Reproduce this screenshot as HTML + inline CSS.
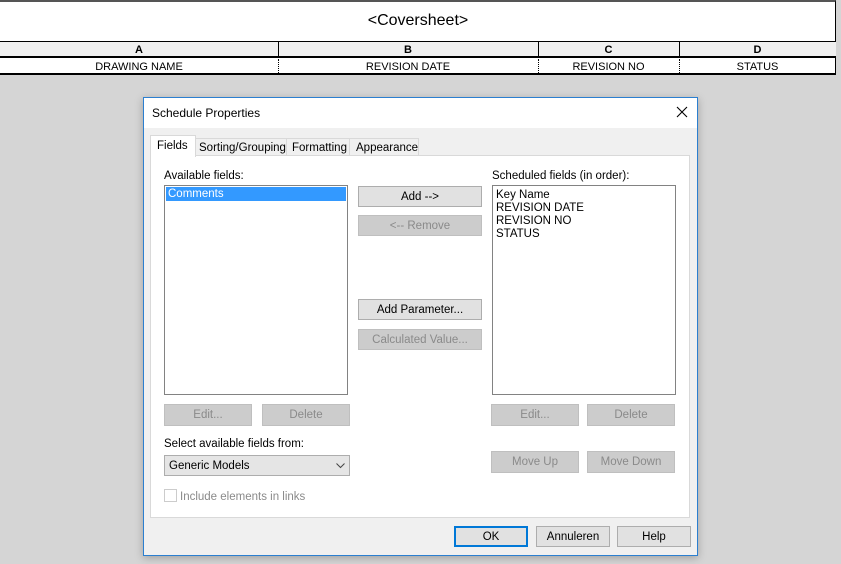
<!DOCTYPE html>
<html><head><meta charset="utf-8"><style>
*{box-sizing:border-box;margin:0;padding:0}
body{width:841px;height:564px;background:#d5d5d5;position:relative;overflow:hidden;font-family:"Liberation Sans",sans-serif;font-size:11.5px;color:#000}
.a{position:absolute}
.btn{position:absolute;background:#e1e1e1;border:1px solid #adadad;text-align:center;line-height:21px;font-size:11.5px}
.dis{background:#cccccc;border-color:#bfbfbf;color:#8a8a8a}
.cell{position:absolute;text-align:center;font-size:11px}
</style></head><body>
<div class="a" style="left:0;top:0;width:836px;height:75px;background:#fff;border:1px solid #000;border-left:none;border-top:2px solid #555"></div>
<div class="a" style="left:0;top:12px;width:836px;text-align:center;font-size:16px">&lt;Coversheet&gt;</div>
<div class="a" style="left:0;top:41px;width:836px;height:17px;background:#f0f0f0;border-top:1px solid #000;border-bottom:2px solid #000"></div>
<div class="a" style="left:0;top:73px;width:836px;height:2px;background:#000"></div>
<div class="a" style="left:278px;top:42px;width:1px;height:15px;background:#000"></div>
<div class="a" style="left:538px;top:42px;width:1px;height:15px;background:#000"></div>
<div class="a" style="left:679px;top:42px;width:1px;height:15px;background:#000"></div>
<div class="a" style="left:278px;top:59px;height:14px;border-left:1px dotted #000"></div>
<div class="a" style="left:538px;top:59px;height:14px;border-left:1px dotted #000"></div>
<div class="a" style="left:679px;top:59px;height:14px;border-left:1px dotted #000"></div>
<div class="cell" style="left:0;width:278px;top:44px;font-weight:bold">A</div>
<div class="cell" style="left:278px;width:260px;top:44px;font-weight:bold">B</div>
<div class="cell" style="left:538px;width:141px;top:44px;font-weight:bold">C</div>
<div class="cell" style="left:679px;width:157px;top:44px;font-weight:bold">D</div>
<div class="cell" style="left:0;width:278px;top:61px">DRAWING NAME</div>
<div class="cell" style="left:278px;width:260px;top:61px">REVISION DATE</div>
<div class="cell" style="left:538px;width:141px;top:61px">REVISION NO</div>
<div class="cell" style="left:679px;width:157px;top:61px">STATUS</div>

<div class="a" style="left:143px;top:97px;width:555px;height:459px;background:#f0f0f0;border:1px solid #2b7fd0;box-shadow:0 2px 8px rgba(0,0,0,.25)"></div>
<div class="a" style="left:144px;top:98px;width:553px;height:30px;background:#fff"></div>
<div class="a" style="left:152px;top:106px;font-size:12px">Schedule Properties</div>
<svg class="a" style="left:676px;top:106px" width="12" height="12"><path d="M1 1L11 11M11 1L1 11" stroke="#000" stroke-width="1.1"/></svg>

<div class="a" style="left:150px;top:155px;width:540px;height:363px;background:#fff;border:1px solid #d9d9d9"></div>
<div class="a" style="left:195px;top:138px;width:92px;height:18px;background:#f0f0f0;border:1px solid #d9d9d9"></div>
<div class="a" style="left:287px;top:138px;width:63px;height:18px;background:#f0f0f0;border:1px solid #d9d9d9;border-left:none"></div>
<div class="a" style="left:350px;top:138px;width:69px;height:18px;background:#f0f0f0;border:1px solid #d9d9d9;border-left:none"></div>
<div class="a" style="left:150px;top:135px;width:46px;height:22px;background:#fff;border:1px solid #d9d9d9;border-bottom:none"></div>
<div class="a" style="left:157px;top:140px">Fields</div>
<div class="a" style="left:199px;top:142px">Sorting/Grouping</div>
<div class="a" style="left:292px;top:142px">Formatting</div>
<div class="a" style="left:356px;top:142px">Appearance</div>

<div class="a" style="left:164px;top:170px">Available fields:</div>
<div class="a" style="left:492px;top:170px">Scheduled fields (in order):</div>
<div class="a" style="left:164px;top:185px;width:184px;height:210px;border:1px solid #828282;background:#fff"></div>
<div class="a" style="left:166px;top:187px;width:180px;height:14px;background:#3399ff;color:#fff;padding-left:2px;line-height:14px">Comments</div>
<div class="a" style="left:492px;top:185px;width:184px;height:210px;border:1px solid #828282;background:#fff;padding:2px 3px;line-height:13px;padding-top:3px">Key Name<br>REVISION DATE<br>REVISION NO<br>STATUS</div>

<div class="btn" style="left:358px;top:186px;width:124px;height:21px;line-height:20px">Add --&gt;</div>
<div class="btn dis" style="left:358px;top:215px;width:124px;height:21px;line-height:20px">&lt;-- Remove</div>
<div class="btn" style="left:358px;top:299px;width:124px;height:21px;line-height:20px">Add Parameter...</div>
<div class="btn dis" style="left:358px;top:329px;width:124px;height:21px;line-height:20px">Calculated Value...</div>

<div class="btn dis" style="left:164px;top:404px;width:88px;height:22px">Edit...</div>
<div class="btn dis" style="left:262px;top:404px;width:88px;height:22px">Delete</div>
<div class="btn dis" style="left:491px;top:404px;width:88px;height:22px">Edit...</div>
<div class="btn dis" style="left:587px;top:404px;width:88px;height:22px">Delete</div>
<div class="btn dis" style="left:491px;top:451px;width:88px;height:22px">Move Up</div>
<div class="btn dis" style="left:587px;top:451px;width:88px;height:22px">Move Down</div>

<div class="a" style="left:164px;top:438px">Select available fields from:</div>
<div class="a" style="left:164px;top:455px;width:186px;height:21px;background:#e5e5e5;border:1px solid #adadad;padding-left:4px;line-height:21px">Generic Models</div>
<svg class="a" style="left:336px;top:463px" width="9" height="6"><path d="M0.5 0.5L4.5 4.5L8.5 0.5" stroke="#444" fill="none"/></svg>
<div class="a" style="left:164px;top:489px;width:13px;height:13px;border:1px solid #ccc;background:#fff"></div>
<div class="a" style="left:180px;top:491px;color:#8a8a8a">Include elements in links</div>

<div class="btn" style="left:454px;top:526px;width:74px;height:21px;border:2px solid #0078d7;line-height:19px">OK</div>
<div class="btn" style="left:536px;top:526px;width:74px;height:21px;line-height:20px">Annuleren</div>
<div class="btn" style="left:617px;top:526px;width:74px;height:21px;line-height:20px">Help</div>
</body></html>
